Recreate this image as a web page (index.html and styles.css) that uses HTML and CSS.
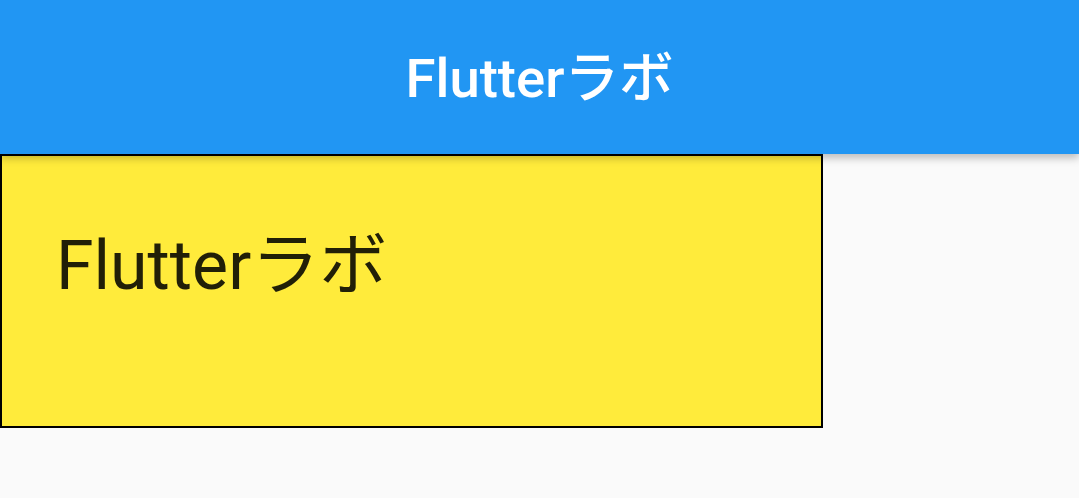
FILE: index.html
```html
<!DOCTYPE html>
<html lang="ja">
<head>
<meta charset="utf-8">
<title>Flutterラボ</title>
<link rel="stylesheet" href="styles.css">
</head>
<body>
<header class="app-bar"><h1 class="title">Flutterラボ</h1></header>
<main class="content">
  <div class="box"><p class="box-text">Flutterラボ</p></div>
</main>
</body>
</html>
```
FILE: styles.css
```css
html, body {
  margin: 0;
  padding: 0;
  height: 100%;
  background: #fafafa;
  font-family: Roboto, "Noto Sans CJK JP", sans-serif;
  overflow: hidden;
}
.app-bar {
  position: relative;
  z-index: 2;
  height: 154px;
  background: #2196f3;
  display: flex;
  align-items: center;
  justify-content: center;
  box-shadow: 0 4px 8px rgba(0,0,0,0.25);
}
.title {
  margin: 0;
  color: #fff;
  font-size: 54.5px;
  font-weight: 500;
  line-height: 1;
  padding-top: 2px;
}
.content {
  position: relative;
  z-index: 1;
}
.box {
  box-sizing: border-box;
  width: 823px;
  height: 274px;
  background: #ffeb3b;
  border: 2px solid #000;
  padding: 70px 0 0 54px;
}
.box-text {
  margin: 0;
  font-size: 68px;
  line-height: 1.2;
  color: rgba(0,0,0,0.87);
}
```
